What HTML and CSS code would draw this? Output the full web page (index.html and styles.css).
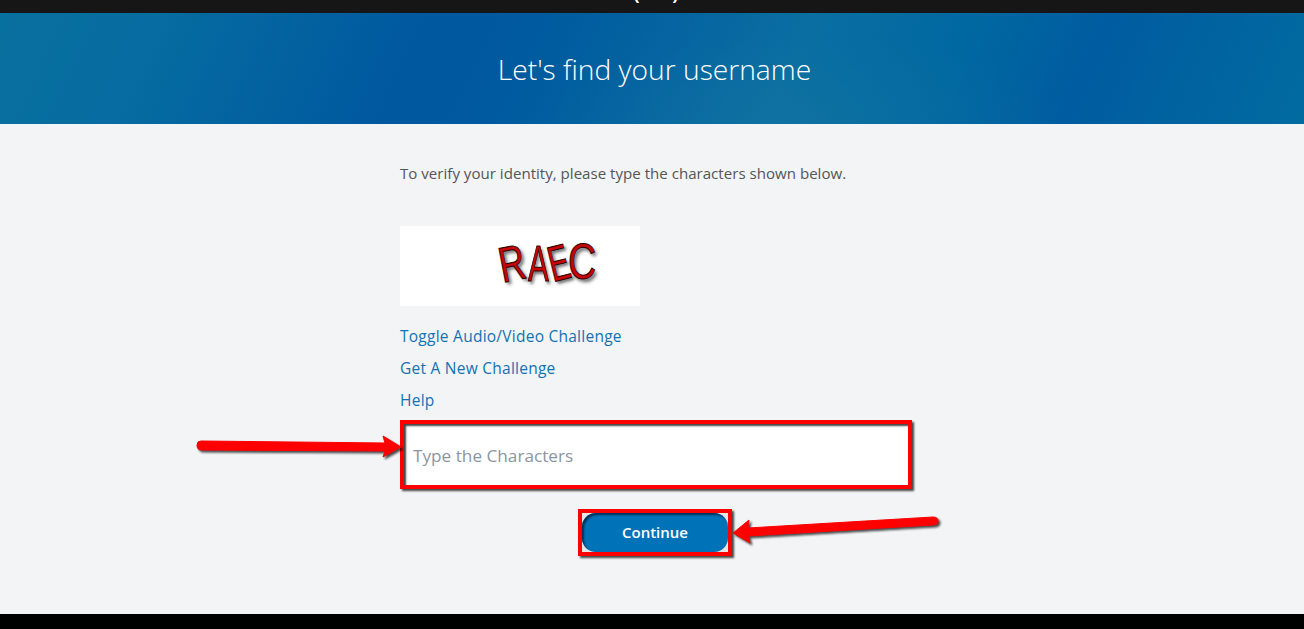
FILE: index.html
```html
<!DOCTYPE html>
<html lang="en">

<head>
    <meta charset="UTF-8">
    <meta name="viewport" content="width=device-width, initial-scale=1.0">
    <title>Let's find your username</title>
    <link rel="stylesheet" href="styles.css">
</head>

<body>
    <div class="top-bar"><span class="top-bar-text">(&nbsp;&nbsp;&nbsp;&nbsp;&nbsp;&nbsp;)</span></div>
    <header class="banner">
        <h1 class="banner-title">Let's find your username</h1>
    </header>
    <main class="content">
        <form class="verify-form">
            <p class="verify-text">To verify your identity, please type the characters shown below.</p>
            <div class="captcha">
                <span class="captcha-word">
                    <span class="letter letter-r">R</span><span class="letter letter-a">A</span><span class="letter letter-e">E</span><span class="letter letter-c">C</span>
                </span>
            </div>
            <ul class="challenge-links">
                <li><a href="#">Toggle Audio/Video Challenge</a></li>
                <li><a href="#">Get A New Challenge</a></li>
                <li><a href="#">Help</a></li>
            </ul>
            <input type="text" class="captcha-input" placeholder="Type the Characters">
            <div class="button-row">
                <div class="button-mark">
                    <button type="button" class="continue-button">Continue</button>
                </div>
            </div>
        </form>
        <!-- annotation arrows drawn over the page -->
        <svg class="arrow arrow-left" width="220" height="40" viewBox="190 430 220 40">
            <path d="M201 441 Q197 441 197 445 Q197 450 201 450 L385 451 L383 457 L401 447 L383 436 L385 443 Z" fill="#f00" stroke="#f00" stroke-linejoin="round"/>
        </svg>
        <svg class="arrow arrow-right" width="220" height="40" viewBox="725 510 220 40">
            <path d="M933 517 Q938 517 938 521 Q938 525 933 525 L748 536 L750 543 L733 533 L749 520 L748 528 Z" fill="#f00" stroke="#f00" stroke-linejoin="round"/>
        </svg>
    </main>
    <footer class="bottom-bar"></footer>
</body>

</html>
```

FILE: styles.css
```css
html,
body {
    height: 100%;
}

body {
    margin: 0;
    display: flex;
    flex-direction: column;
    overflow: hidden;
    background-color: #f2f4f6;
    font-family: 'Open Sans', 'Noto Sans', sans-serif;
}

.top-bar {
    height: 13px;
    flex-shrink: 0;
    overflow: hidden;
    background-color: #161616;
    text-align: center;
}

.top-bar-text {
    display: block;
    margin-top: -20px;
    padding-left: 8px;
    color: #fff;
    font-size: 21px;
    font-weight: 600;
    line-height: 24px;
}

.banner {
    height: 111px;
    flex-shrink: 0;
    display: flex;
    align-items: center;
    justify-content: center;
    background:
        radial-gradient(ellipse 260px 90px at 62% 100%, rgba(24, 120, 160, 0.4), rgba(24, 120, 160, 0)),
        linear-gradient(115deg, #08709f 0%, #066ca1 12%, #00589f 32%, #005a9f 40%, #0a6ea2 60%, #0068a1 72%, #005ca0 82%, #016ba0 100%);
}

.banner-title {
    margin: 0 0 0 5px;
    color: #fff;
    font-size: 28.2px;
    font-weight: 300;
    line-height: 40px;
}

.content {
    position: relative;
    flex: 1;
    padding-left: 400px;
}

.verify-form {
    width: 512px;
}

.verify-text {
    margin: 39px 0 0;
    color: #555;
    font-size: 15.1px;
    line-height: 20px;
}

.captcha {
    width: 240px;
    height: 80px;
    margin-top: 43px;
    display: flex;
    align-items: center;
    background-color: #fff;
}

.captcha-word {
    display: flex;
    padding-left: 95px;
    margin-top: -5px;
    color: #c80404;
    font-family: 'Liberation Sans', sans-serif;
    font-size: 50px;
    line-height: 50px;
    -webkit-text-stroke: 1px #2a0000;
    text-shadow: 3px 3px 4px #666;
}

.letter {
    display: block;
}

.letter-r {
    width: 29px;
    transform: rotate(-11deg) scaleX(0.72);
}

.letter-a {
    width: 21px;
    transform: scaleX(0.62);
}

.letter-e {
    width: 19px;
    transform: rotate(-14deg) scaleX(0.62);
}

.letter-c {
    transform: translateY(-2px) scaleX(0.78);
}

.challenge-links {
    margin: 14px 0 0;
    padding: 0;
    list-style: none;
    font-size: 15.5px;
    letter-spacing: 0.25px;
    line-height: 32px;
}

.challenge-links a {
    color: #1272b4;
    text-decoration: none;
}

.captcha-input {
    display: block;
    box-sizing: border-box;
    width: 512px;
    height: 69px;
    margin-top: 4px;
    padding: 2px 9px 0;
    border: 4px solid #f00;
    background-color: #fff;
    box-shadow: 2px 2px 2px #444, inset 2px 2px 2px #444;
    font-family: inherit;
    font-size: 17.2px;
    outline: none;
}

.captcha-input::placeholder {
    color: #8b95a0;
    opacity: 1;
}

.button-row {
    display: flex;
    justify-content: center;
    margin: 20px 0 0 -2px;
}

.button-mark {
    box-sizing: border-box;
    width: 154px;
    height: 47px;
    border: 4px solid #f00;
    background-color: #e4e6e8;
    box-shadow: 2px 2px 2px #444;
}

.continue-button {
    display: block;
    width: 100%;
    height: 100%;
    padding: 0 0 2px;
    border: none;
    border-radius: 14px;
    background-color: #0072b8;
    box-shadow: inset 2px 2px 2px rgba(0, 20, 50, 0.7);
    color: #fff;
    font-family: inherit;
    font-size: 15px;
    font-weight: 600;
}

.arrow {
    position: absolute;
    filter: drop-shadow(2px 2px 1px rgba(0, 0, 0, 0.7));
}

.arrow-left {
    left: 190px;
    top: 306px;
}

.arrow-right {
    left: 725px;
    top: 386px;
}

.bottom-bar {
    height: 15px;
    flex-shrink: 0;
    background-color: #000;
}
```
